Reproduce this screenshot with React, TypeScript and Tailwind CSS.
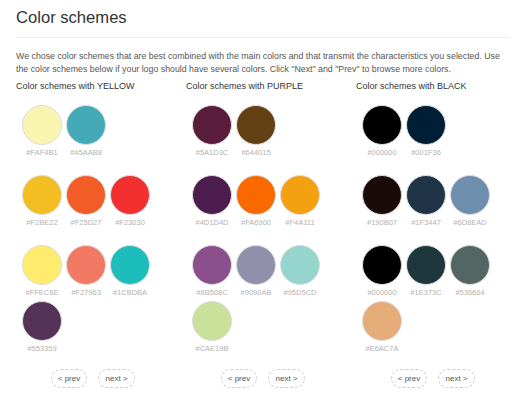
const schemes = [
  {
    name: 'YELLOW',
    groups: [
      ['FAF4B1', '45AAB8'],
      ['F2BE22', 'F25D27', 'F23030'],
      ['FFEC6E', 'F27963', '1CBDBA', '553359'],
    ],
  },
  {
    name: 'PURPLE',
    groups: [
      ['5A1D3C', '644015'],
      ['4D1D4D', 'FA6900', 'F4A111'],
      ['8B508C', '9090AB', '95D5CD', 'CAE19B'],
    ],
  },
  {
    name: 'BLACK',
    groups: [
      ['000000', '001F36'],
      ['190B07', '1F3447', '6D8EAD'],
      ['000000', '1E373C', '536664', 'E6AC7A'],
    ],
  },
]

function Swatch({ hex }: { hex: string }) {
  return (
    <div className="flex w-[40px] flex-col items-center mr-[4px] mb-[3px]">
      <div
        className="h-[40px] w-[40px] rounded-full border border-[#dcdcdc]"
        style={{ backgroundColor: '#' + hex }}
      />
      <div className="mt-[3px] whitespace-nowrap text-[7.5px] leading-[10px] text-[#b3b3b3]">#{hex}</div>
    </div>
  )
}

export default function App() {
  return (
    <div className="min-h-[400px] bg-white pl-4 pr-[2px] font-['Liberation_Sans',Arial,sans-serif]">
      <h1 className="pt-[8px] text-[16.6px] leading-[20px] text-[#333]">Color schemes</h1>
      <div className="mt-[9px] h-px bg-[#eeeeee]" />
      <p className="mt-[12px] text-[8.8px] leading-[13px] text-[#555]">
        We chose color schemes that are best combined with the main colors and that transmit the characteristics you selected. Use the color schemes below if your logo should have several colors. Click "Next" and "Prev" to browse more colors.
      </p>

      <div className="mt-[4px] grid grid-cols-3 gap-x-4">
        {schemes.map((s) => (
          <div key={s.name} className="flex flex-col">
            <div className="text-[9px] leading-[13px] text-[#333]">Color schemes with {s.name}</div>
            <div className="mt-[12px] flex flex-col gap-[14px] pl-[6px]">
              {s.groups.map((g, i) => (
                <div key={i} className="flex flex-wrap">
                  {g.map((hex, j) => (
                    <Swatch key={j} hex={hex} />
                  ))}
                </div>
              ))}
            </div>
            <div className="mt-[12px] flex justify-center gap-[11px]">
              <button className="h-[19px] w-[36px] rounded-full border border-dashed border-[#cccccc] text-[8px] text-[#555]">&lt; prev</button>
              <button className="h-[19px] w-[37px] rounded-full border border-dashed border-[#cccccc] text-[8px] text-[#555]">next &gt;</button>
            </div>
          </div>
        ))}
      </div>
    </div>
  )
}
